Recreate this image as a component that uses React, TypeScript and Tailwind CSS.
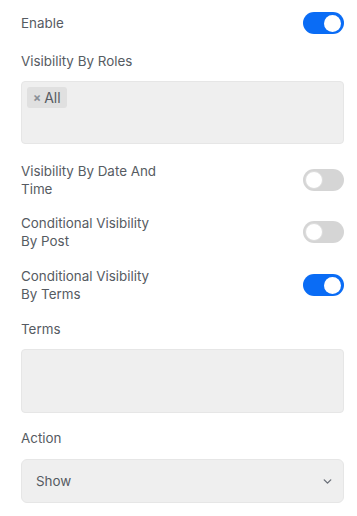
import { ChevronDown } from "lucide-react"

function Toggle({ on }: { on: boolean }) {
  return (
    <div
      className={
        on
          ? "flex h-[22px] w-[41px] shrink-0 items-center justify-end rounded-full bg-[#0a6cf5] px-[3px]"
          : "flex h-[22px] w-[41px] shrink-0 items-center justify-start rounded-full bg-[#d5d5d5] px-[2px]"
      }
    >
      <div
        className={
          on
            ? "h-[17px] w-[17px] rounded-full bg-white"
            : "h-[18px] w-[18px] rounded-full border border-[#dcdcdc] bg-white"
        }
      />
    </div>
  )
}

function SwitchRow({ label, on, className }: { label: string; on: boolean; className?: string }) {
  return (
    <div className={"flex items-center justify-between " + (className ?? "")}>
      <span className="w-[145px] text-[13.4px] leading-[18px]">{label}</span>
      <Toggle on={on} />
    </div>
  )
}

export default function App() {
  return (
    <div
      className="min-h-[516px] bg-white pl-[21px] pr-[13px] pt-[12px] text-[#565b62]"
      style={{ fontFamily: "Inter, 'Noto Sans', sans-serif" }}
    >
      <div className="flex h-[22px] items-center justify-between">
        <span className="text-[13.4px] leading-[18px]">Enable</span>
        <Toggle on />
      </div>

      <div className="mt-[18px] text-[13.4px] leading-[18px]">Visibility By Roles</div>
      <div className="mt-[11px] flex h-[63px] items-start rounded-[4px] border border-[#e6e6e6] bg-[#efefef] p-[5px]">
        <span className="flex h-[21px] items-center gap-[3px] rounded-[3px] bg-[#e0e0e0] px-[6px] text-[14px] leading-none text-[#565b62]">
          <span className="text-[12px] font-bold text-[#8a8f96]">×</span>
          All
        </span>
      </div>

      <SwitchRow className="mt-[18px]" label="Visibility By Date And Time" on={false} />
      <SwitchRow className="mt-[16px]" label="Conditional Visibility By Post" on={false} />
      <SwitchRow className="mt-[17px]" label="Conditional Visibility By Terms" on />

      <div className="mt-[17px] text-[13.4px] leading-[18px]">Terms</div>
      <div className="mt-[11px] h-[64px] rounded-[4px] border border-[#e6e6e6] bg-[#efefef]" />

      <div className="mt-[16px] text-[13.4px] leading-[18px]">Action</div>
      <div className="mt-[12px] flex h-[44px] items-center justify-between rounded-[6px] border border-[#e6e6e6] bg-[#efefef] pl-[14px] pr-[9px]">
        <span className="text-[13.4px] text-[#565b62]">Show</span>
        <ChevronDown size={13} strokeWidth={2.6} className="text-[#6b7079]" />
      </div>
    </div>
  )
}
